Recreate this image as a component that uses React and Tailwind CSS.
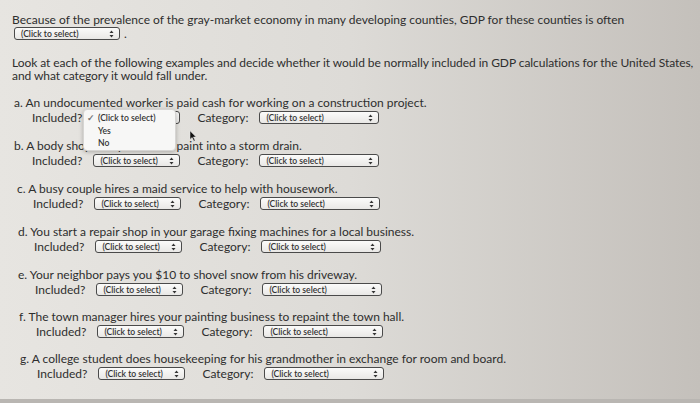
import React from "react";

function Arrows() {
  return (
    <svg width="5" height="8" viewBox="0 0 5 8" className="shrink-0">
      <path d="M2.5 0.5 L4.5 3 L0.5 3 Z" fill="#333" />
      <path d="M2.5 7.5 L4.5 5 L0.5 5 Z" fill="#333" />
    </svg>
  );
}

function Select({ className }) {
  return (
    <div
      className={
        "flex items-center justify-between h-[13px] border border-[#4a4a4a] rounded-[3px] bg-gradient-to-b from-[#fbfbfa] to-[#e9e8e6] pl-[6px] pr-[5px] text-[8.6px] font-semibold leading-none text-[#333] " +
        className
      }
    >
      <span className="pt-[2px]">(Click to select)</span>
      <Arrows />
    </div>
  );
}

const items = [
  { label: "a. An undocumented worker is paid cash for working on a construction project.", pad: "pl-[14px]", sub: "pl-[32px]", top: "mt-[14px]" },
  { label: "b. A body shop dumps used oil paint into a storm drain.", pad: "pl-[14px]", sub: "pl-[32px]", top: "mt-[14px]" },
  { label: "c. A busy couple hires a maid service to help with housework.", pad: "pl-[17px]", sub: "pl-[33px]", top: "mt-[14px]" },
  { label: "d. You start a repair shop in your garage fixing machines for a local business.", pad: "pl-[18px]", sub: "pl-[34px]", top: "mt-[14px]" },
  { label: "e. Your neighbor pays you $10 to shovel snow from his driveway.", pad: "pl-[18px]", sub: "pl-[35px]", top: "mt-[14px]" },
  { label: "f. The town manager hires your painting business to repaint the town hall.", pad: "pl-[19px]", sub: "pl-[36px]", top: "mt-[13px]" },
  { label: "g. A college student does housekeeping for his grandmother in exchange for room and board.", pad: "pl-[20px]", sub: "pl-[37px]", top: "mt-[13px]" },
];

function Item({ item, open }) {
  return (
    <div className={"relative " + item.top}>
      <div className={"h-[14px] leading-[14px] whitespace-nowrap " + item.pad}>{item.label}</div>
      <div className={"flex items-center h-[15px] leading-none " + item.sub}>
        <span>Included?</span>
        <Select className="w-[87px] ml-[11px]" />
        <span className="ml-[17px]">Category:</span>
        <Select className="w-[120px] ml-[11px]" />
      </div>
      {open && (
        <div className="absolute left-[83px] top-[13px] w-[93px] h-[42px] bg-[#f7f7f6] rounded-[4px] shadow-[0_1px_4px_rgba(0,0,0,0.25)] border border-[#d6d5d3] z-10 text-[8.6px] font-semibold text-[#333] leading-none pt-[4px]">
          <div className="flex items-center">
            <span className="w-[14px] text-center text-[#777]">✓</span>
            <span>(Click to select)</span>
          </div>
          <div className="pl-[14px] mt-[4px]">Yes</div>
          <div className="pl-[14px] mt-[4px]">No</div>
        </div>
      )}
    </div>
  );
}

export default function App() {
  return (
    <div
      className="relative w-[700px] h-[403px] overflow-hidden bg-gradient-to-r from-[#e7e5e1] via-[#dddbd7] to-[#c4c0bb] text-[#2e2e2e] text-[12px]"
      style={{ fontFamily: "Lato, 'Open Sans', sans-serif" }}
    >
      <div className="pt-[13px] pl-[12px]">
        <div className="h-[14px] leading-[14px] whitespace-nowrap">
          Because of the prevalence of the gray-market economy in many developing counties, GDP for these counties is often
        </div>
        <div className="flex items-center h-[13px] leading-none pl-[2px]">
          <Select className="w-[106px]" />
          <span className="ml-[4px]">.</span>
        </div>
        <div className="mt-[16px] leading-[13px] whitespace-nowrap tracking-[-0.06px]">
          Look at each of the following examples and decide whether it would be normally included in GDP calculations for the United States,
          <br />
          and what category it would fall under.
        </div>
      </div>
      <div>
        {items.map((item, i) => (
          <Item key={i} item={item} open={i === 0} />
        ))}
      </div>
      <svg className="absolute left-[189px] top-[130px]" width="8" height="12" viewBox="0 0 9 14">
        <path d="M1 1 L1 11 L3.5 8.8 L5.5 13 L7 12.3 L5 8.2 L8.2 8.2 Z" fill="#111" stroke="#eee" strokeWidth="0.6" />
      </svg>
      <div className="absolute left-0 bottom-0 w-full h-[4px] bg-[#b9b6b2]" />
    </div>
  );
}
